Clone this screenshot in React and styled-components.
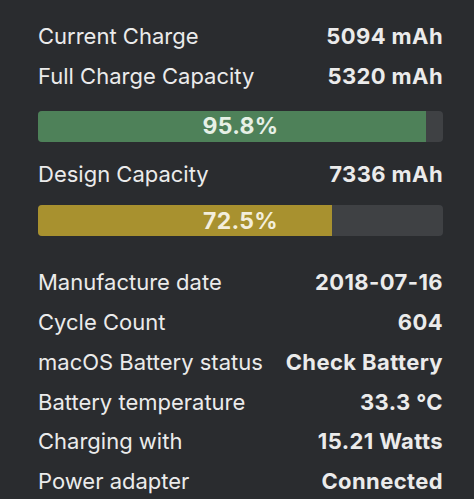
import React from 'react';
import styled, { createGlobalStyle } from 'styled-components';

const GlobalStyle = createGlobalStyle`
  html, body {
    margin: 0;
    padding: 0;
    background-color: #2a2c2f;
  }
`;

const Panel = styled.div`
  background-color: #2a2c2f;
  color: #ececec;
  min-height: 100vh;
  box-sizing: border-box;
  padding: 16px 31px 0 38px;
  font-family: Inter, "Noto Sans", sans-serif;
  font-size: 22px;
  display: flex;
  flex-direction: column;
`;

const Row = styled.div`
  display: flex;
  justify-content: space-between;
  align-items: center;
  height: 39.8px;
  margin-top: ${p => p.$gap || 0}px;
`;

const Label = styled.span`
  font-weight: 400;
  color: #ebebeb;
`;

const Value = styled.span`
  font-weight: 700;
  letter-spacing: 0.4px;
  color: #ebebeb;
`;

const Track = styled.div`
  position: relative;
  height: 31px;
  margin-top: ${p => p.$gap || 0}px;
  background-color: #3f4144;
  border-radius: 4px;
  overflow: hidden;
`;

const Fill = styled.div`
  height: 100%;
  background-color: ${p => p.$color};
`;

const Percent = styled.span`
  position: absolute;
  inset: 0;
  display: flex;
  align-items: center;
  justify-content: center;
  font-size: 23px;
  font-weight: 700;
  letter-spacing: 0.3px;
  color: ${p => p.$text};
`;

const Bar = ({ value, color, text, gap }) => (
  <Track $gap={gap}>
    <Fill $color={color} style={{ width: `${value}%` }} />
    <Percent $text={text}>{value}%</Percent>
  </Track>
);

const details = [
  ['Manufacture date', '2018-07-16'],
  ['Cycle Count', '604'],
  ['macOS Battery status', 'Check Battery'],
  ['Battery temperature', '33.3 °C'],
  ['Charging with', '15.21 Watts'],
  ['Power adapter', 'Connected'],
];

export default function App() {
  return (
    <>
      <GlobalStyle />
      <Panel>
        <Row>
          <Label>Current Charge</Label>
          <Value>5094 mAh</Value>
        </Row>
        <Row>
          <Label>Full Charge Capacity</Label>
          <Value>5320 mAh</Value>
        </Row>
        <Bar value={95.8} color="#4e8159" text="#e6f0e6" gap={15} />
        <Row $gap={13}>
          <Label>Design Capacity</Label>
          <Value>7336 mAh</Value>
        </Row>
        <Bar value={72.5} color="#a8912f" text="#f3eedc" gap={11} />
        {details.map(([label, value], i) => (
          <Row key={label} $gap={i === 0 ? 26 : 0}>
            <Label>{label}</Label>
            <Value>{value}</Value>
          </Row>
        ))}
      </Panel>
    </>
  );
}
